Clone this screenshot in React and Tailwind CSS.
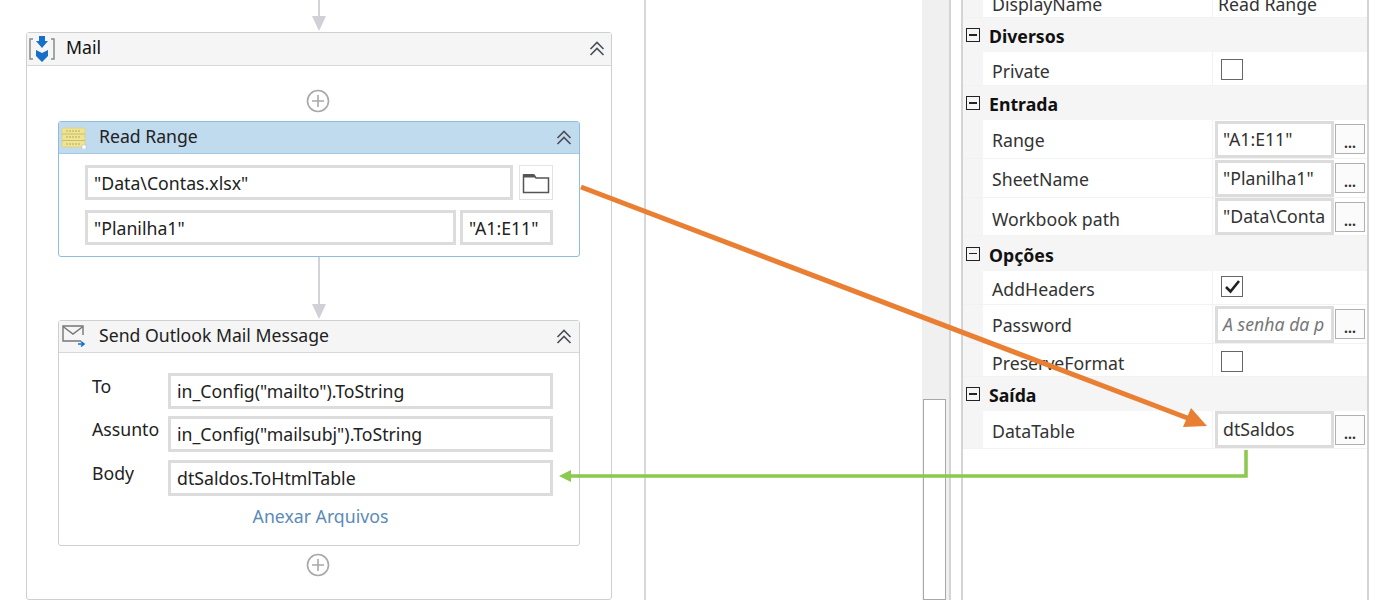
const font = { fontFamily: '"Noto Sans", "Open Sans", sans-serif' };

function ChevronsUp() {
  return (
    <svg width="18" height="18" viewBox="0 0 18 18" fill="none" stroke="#4a4f57" strokeWidth="1.6">
      <path d="M2.5 9 L9 2.5 L15.5 9" />
      <path d="M2.5 15 L9 8.5 L15.5 15" />
    </svg>
  );
}

function PlusCircle() {
  return (
    <svg width="24" height="24" viewBox="0 0 24 24" fill="none" stroke="#a8a8a8" strokeWidth="1.6">
      <circle cx="12" cy="12" r="10.5" />
      <path d="M12 6 V18 M6 12 H18" />
    </svg>
  );
}

function ConnectorArrow({ height }) {
  return (
    <svg width="16" height={height} viewBox={`0 0 16 ${height}`} className="block">
      <rect x="7" y="0" width="2" height={height - 12} fill="#d3d3d8" />
      <path d={`M1 ${height - 15} H15 L8 ${height} Z`} fill="#d0d0d6" />
    </svg>
  );
}

function SequenceIcon() {
  return (
    <svg width="28" height="28" viewBox="0 0 28 28" fill="none">
      <path d="M5 4 H2 V24 H5 M23 4 H26 V24 H23" stroke="#8a8a8a" strokeWidth="1.5" />
      <path d="M11 1 H17 V6 H20 L14 13 L8 6 H11 Z" fill="#1670c9" />
      <path d="M8 15 L14 18 L20 15 V21 L14 27 L8 21 Z" fill="#1670c9" />
    </svg>
  );
}

function SheetIcon() {
  return (
    <svg width="26" height="22" viewBox="0 0 26 22">
      <rect x="1" y="1" width="23" height="19" rx="1.5" fill="#efe48f" stroke="#ddd28a" />
      <path d="M1 7 H24 M1 13.500 H24" stroke="#c9bd72" strokeWidth="1" />
      <path d="M5 4 H20 M5 10 H20 M5 17 H20" stroke="#b3a964" strokeWidth="1" strokeDasharray="2 1" />
      <rect x="21" y="18" width="4" height="4" fill="#ffffff" stroke="#bbbbbb" strokeWidth="0.5" />
    </svg>
  );
}

function MailIcon() {
  return (
    <svg width="26" height="26" viewBox="0 0 26 26" fill="none">
      <path d="M20 17 H2 V2 H22 V11" stroke="#777" strokeWidth="1.4" />
      <path d="M2 2.500 L12 10 L22 2.500" stroke="#777" strokeWidth="1.4" />
      <path d="M17 20 H22 M20 17.500 L23 20 L20 22.500" stroke="#1670c9" strokeWidth="1.6" />
    </svg>
  );
}

function FolderIcon() {
  return (
    <svg width="28" height="22" viewBox="0 0 28 22" fill="none">
      <path d="M1.500 20.500 V3 H12 L14 6 H26.500 V20.500 Z" stroke="#555" strokeWidth="1.5" />
      <path d="M1.500 2 H11.500 L13.500 5.500 H1.500 Z" fill="#555" />
    </svg>
  );
}

function Field({ children, className = "" }) {
  return (
    <div className={`flex items-center overflow-hidden whitespace-nowrap border-[3px] border-[#dcdcdc] bg-white pl-[6px] pt-[1px] text-[17.7px] text-[#222] ${className}`}>
      {children}
    </div>
  );
}

function Card({ icon, title, selected, children, className = "" }) {
  return (
    <div className={`rounded-[3px] border bg-white ${selected ? "border-[#8fbde0]" : "border-[#cfcfcf]"} ${className}`}>
      <div className={`flex h-[32px] items-center border-b-[1.5px] pl-[2px] pr-[6px] ${selected ? "border-[#a3c8e4] bg-[#c0daee]" : "border-[#d8d8d8] bg-[#f5f5f5]"}`}>
        <span className="flex w-[38px] shrink-0 items-center">{icon}</span>
        <span className="flex-1 pb-[3px] text-[17.65px] text-[#222]">{title}</span>
        <ChevronsUp />
      </div>
      {children}
    </div>
  );
}

function MailRow({ label, value, mt }) {
  return (
    <div className={`flex h-[36px] ${mt}`}>
      <span className="w-[76px] pt-[2px] text-[17.7px] leading-[22px] text-[#222]">{label}</span>
      <Field className="flex-1">{value}</Field>
    </div>
  );
}

function GroupHeader({ title, h = "h-[34px]" }) {
  return (
    <div className={`flex ${h} items-center bg-[#f5f5f5]`}>
      <span className="ml-[3px] flex h-[14px] w-[14px] items-center justify-center border-[1.5px] border-[#222]">
        <span className="h-[1.5px] w-[8px] bg-[#222]" />
      </span>
      <span className="ml-[9px] pt-[3px] text-[17.7px] font-bold text-[#111]">{title}</span>
    </div>
  );
}

function PropRow({ label, h, pad = "pt-[2px]", children }) {
  return (
    <div className={`flex ${h} border-b border-[#f2f2f2] bg-white`}>
      <div className="w-[20px] shrink-0 bg-[#f5f5f5]" />
      <div className={`flex w-[230px] shrink-0 items-center border-r border-[#f2f2f2] pl-[9px] text-[17.7px] text-[#333] ${pad}`}>
        {label}
      </div>
      <div className="flex flex-1 items-center pl-[2px]">{children}</div>
    </div>
  );
}

function PropInput({ children, placeholder }) {
  return (
    <>
      <div className={`h-[37px] w-[119px] shrink-0 overflow-hidden whitespace-nowrap border-[3px] border-[#dcdcdc] bg-white pl-[5px] text-[17.7px] leading-[31px] ${placeholder ? "italic text-[#777]" : "text-[#333]"}`}>
        {children}
      </div>
      <div className="ml-[1px] flex h-[30px] w-[30px] shrink-0 items-end justify-center border-[1.5px] border-[#b0b0b0] bg-[#fbfbfb] pb-[2px] text-[14px] font-bold leading-[16px] text-[#333]">
        ...
      </div>
    </>
  );
}

function Check({ checked, low }) {
  return (
    <div className={`${low ? "mt-[2px]" : "mb-[2px]"} ml-[6px] flex h-[21px] w-[22px] items-center justify-center border-[1.5px] border-[#666] bg-white`}>
      {checked && (
        <svg width="17" height="15" viewBox="0 0 17 15" fill="none" stroke="#222" strokeWidth="2.6">
          <path d="M2 8 L6.500 12.500 L15 2" />
        </svg>
      )}
    </div>
  );
}

export default function App() {
  return (
    <div className="relative flex h-[600px] w-[1380px] overflow-hidden bg-white" style={font}>
      {/* designer */}
      <div className="w-[646px] shrink-0 border-r-[2px] border-[#d8d8d8] pl-[26px] pr-[32px]">
        <div className="flex h-[32px] justify-center">
          <ConnectorArrow height={31} />
        </div>
        <div className="h-[568px] rounded-[3px] border-[1.5px] border-[#cfcfcf]">
          <div className="flex h-[33px] items-center border-b-[1.5px] border-[#d8d8d8] bg-[#f5f5f5] pl-[1px] pr-[5px]">
            <span className="flex w-[38px] shrink-0 items-center"><SequenceIcon /></span>
            <span className="flex-1 pb-[4px] text-[17.7px] text-[#111]">Mail</span>
            <ChevronsUp />
          </div>
          <div className="flex justify-center pr-[2px] pt-[23px]"><PlusCircle /></div>
          <div className="px-[31px] pt-[8px]">
            <Card selected icon={<SheetIcon />} title="Read Range" className="h-[136px]">
              <div className="pl-[26px] pr-[26px] pt-[11px]">
                <div className="flex h-[35px]">
                  <Field className="flex-1 pt-[2px]">"Data\Contas.xlsx"</Field>
                  <div className="ml-[6px] flex w-[34px] items-center justify-center border-[1.5px] border-[#e3e3e3]"><FolderIcon /></div>
                </div>
                <div className="mt-[10px] flex h-[35px]">
                  <Field className="flex-1">"Planilha1"</Field>
                  <Field className="ml-[4px] w-[93px]">"A1:E11"</Field>
                </div>
              </div>
            </Card>
            <div className="flex h-[63px] justify-center"><ConnectorArrow height={62} /></div>
            <Card icon={<MailIcon />} title="Send Outlook Mail Message" className="h-[226px]">
              <div className="pl-[33px] pr-[26px] pt-[20px]">
                <MailRow label="To" value={'in_Config("mailto").ToString'} mt="" />
                <MailRow label="Assunto" value={'in_Config("mailsubj").ToString'} mt="mt-[7px]" />
                <MailRow label="Body" value="dtSaldos.ToHtmlTable" mt="mt-[8px]" />
                <div className="mt-[7px] pl-[76px] text-center text-[17.7px] leading-[26px] text-[#5b8bb8]">
                  <span className="mr-[80px] inline-block">Anexar Arquivos</span>
                </div>
              </div>
            </Card>
            <div className="flex justify-center pr-[2px] pt-[7px]"><PlusCircle /></div>
          </div>
        </div>
      </div>

      <div className="flex-1" />

      {/* scrollbar */}
      <div className="flex w-[27px] shrink-0 flex-col bg-[#f0f0f0] pl-[1px] pr-[3px]">
        <div className="h-[399px] shrink-0" />
        <div className="flex-1 border-[1.5px] border-[#a8a8a8] bg-white" />
      </div>

      {/* properties */}
      <div className="w-[431px] shrink-0 border-l-[2px] border-[#d4d4d4] pl-[10px] pr-[11px]">
        <div className="h-full border-x-[2px] border-[#d4d4d4]">
          <PropRow label={<span className="-translate-y-[5px]">DisplayName</span>} h="h-[18px] overflow-hidden">
            <span className="-translate-y-[4px] pl-[3px] text-[17.7px] text-[#333]">Read Range</span>
          </PropRow>
          <GroupHeader title="Diversos" />
          <PropRow label="Private" h="h-[34px]" pad="pt-[6px]"><Check low /></PropRow>
          <GroupHeader title="Entrada" />
          <PropRow label="Range" h="h-[39px]"><PropInput>"A1:E11"</PropInput></PropRow>
          <PropRow label="SheetName" h="h-[39px]"><PropInput>"Planilha1"</PropInput></PropRow>
          <PropRow label="Workbook path" h="h-[38px]" pad="pt-[5px]"><PropInput>"Data\Conta</PropInput></PropRow>
          <GroupHeader title="Opções" h="h-[35px]" />
          <PropRow label="AddHeaders" h="h-[34px]" pad="pt-[4px]"><Check checked /></PropRow>
          <PropRow label="Password" h="h-[39px]"><PropInput placeholder>A senha da p</PropInput></PropRow>
          <PropRow label="PreserveFormat" h="h-[33px]" pad="pt-[6px]"><Check low /></PropRow>
          <GroupHeader title="Saída" />
          <PropRow label="DataTable" h="h-[38px]" pad="pt-[4px]"><PropInput>dtSaldos</PropInput></PropRow>
        </div>
      </div>

      {/* annotation arrows over the screenshot */}
      <svg className="pointer-events-none absolute left-0 top-0" width="1380" height="600" viewBox="0 0 1380 600" fill="none">
        <path d="M581 187 L1190 419" stroke="#e97f32" strokeWidth="5" />
        <path d="M1207 426 L1183 427 L1191 408 Z" fill="#e97f32" />
        <path d="M1246 450 V476 H570" stroke="#8bc94f" strokeWidth="3.500" />
        <path d="M559 476 L571 470 V482 Z" fill="#8bc94f" />
      </svg>
    </div>
  );
}
